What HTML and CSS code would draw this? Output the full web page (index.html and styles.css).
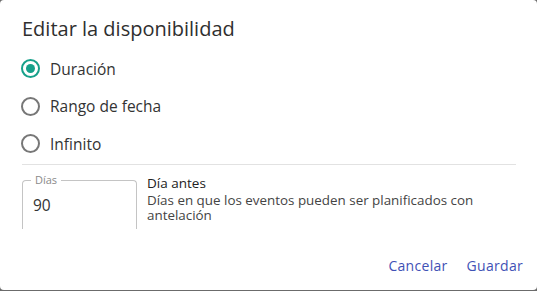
FILE: index.html
```html
<!DOCTYPE html>
<html lang="es">
<head>
<meta charset="utf-8">
<link rel="stylesheet" href="styles.css">
</head>
<body>
<div class="dialog">
  <h1 class="title">Editar la disponibilidad</h1>
  <div class="radios">
    <label class="radio"><span class="circle checked"><span class="dot"></span></span><span class="rlabel">Duración</span></label>
    <label class="radio"><span class="circle"></span><span class="rlabel">Rango de fecha</span></label>
    <label class="radio"><span class="circle"></span><span class="rlabel">Infinito</span></label>
  </div>
  <div class="divider"></div>
  <div class="fieldrow">
    <div class="field">
      <span class="flabel">Días</span>
      <span class="fvalue">90</span>
    </div>
    <div class="info">
      <div class="info-title">Día antes</div>
      <div class="info-desc">Días en que los eventos pueden ser planificados con antelación</div>
    </div>
  </div>
  <div class="actions">
    <button class="btn">Cancelar</button>
    <button class="btn">Guardar</button>
  </div>
</div>
</body>
</html>
```
FILE: styles.css
```css
html, body {
  margin: 0;
  padding: 0;
  background: #6b6b6b;
}
body {
  width: 537px;
  height: 291px;
  overflow: hidden;
  font-family: "Open Sans", "Noto Sans", sans-serif;
}
.dialog {
  width: 537px;
  height: 290px;
  background: #fff;
  border-radius: 4px;
  box-sizing: border-box;
  padding: 0 21px 0 22px;
  display: flex;
  flex-direction: column;
}
.title {
  margin: 0;
  padding-top: 16px;
  font-size: 20px;
  line-height: 26px;
  font-weight: 400;
  color: #2f2f2f;
}
.radios {
  margin-top: 8px;
  display: flex;
  flex-direction: column;
}
.radio {
  height: 37.5px;
  display: flex;
  align-items: center;
  gap: 10px;
  margin-left: -1px;
}
.circle {
  width: 19px;
  height: 19px;
  box-sizing: border-box;
  border: 2px solid #777;
  border-radius: 50%;
  display: flex;
  align-items: center;
  justify-content: center;
}
.circle.checked {
  border-color: #16a08a;
}
.dot {
  width: 9px;
  height: 9px;
  border-radius: 50%;
  background: #16a08a;
}
.rlabel {
  font-size: 15.5px;
  color: #333;
}
.divider {
  margin-top: 1px;
  height: 1px;
  background: #e2e2e2;
  margin-right: 0;
}
.fieldrow {
  display: flex;
  margin-top: 15px;
  gap: 10px;
}
.field {
  position: relative;
  flex: none;
  width: 115px;
  height: 49px;
  box-sizing: border-box;
  border: 1px solid #c4c4c4;
  border-bottom: 0;
  border-radius: 4px 4px 0 0;
  padding: 13px 0 0 10px;
}
.flabel {
  position: absolute;
  top: -8px;
  left: 8px;
  padding: 0 4px;
  background: #fff;
  font-size: 11px;
  line-height: 14px;
  color: #8a8a8a;
}
.fvalue {
  font-size: 15.5px;
  color: #333;
}
.info {
  margin-top: -5px;
}
.info-title {
  font-size: 13.5px;
  line-height: 17px;
  color: #222;
  font-weight: 500;
}
.info-desc {
  margin-top: 1px;
  font-size: 13.4px;
  line-height: 15px;
  color: #444;
  width: 345px;
}
.actions {
  margin-top: auto;
  margin-bottom: 15px;
  display: flex;
  justify-content: flex-end;
  gap: 19px;
  margin-right: -7px;
}
.btn {
  border: 0;
  background: transparent;
  padding: 0;
  font-family: inherit;
  font-size: 14px;
  line-height: 18px;
  font-weight: 500;
  color: #3f51b5;
  letter-spacing: 0.3px;
}
```
